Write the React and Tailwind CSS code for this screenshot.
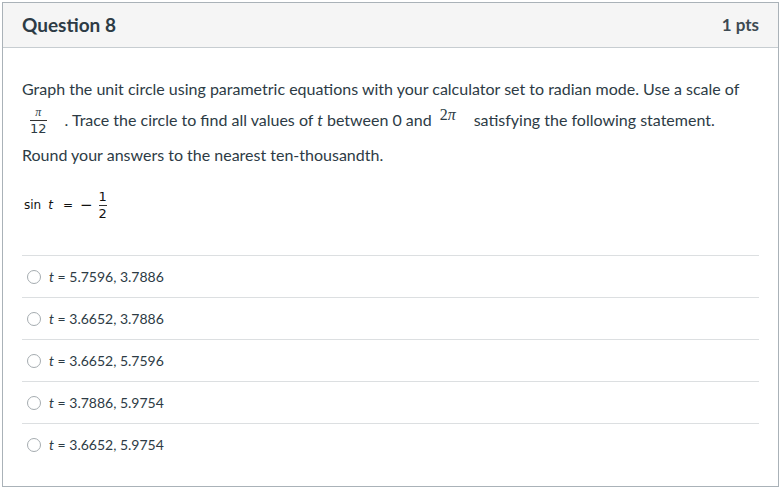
const answers = ['5.7596, 3.7886', '3.6652, 3.7886', '3.6652, 5.7596', '3.7886, 5.9754', '3.6652, 5.9754']

function Fraction({ top, bottom, className = '' }) {
  return (
    <span className={`inline-flex flex-col items-center align-middle leading-none ${className}`}>
      <span className="pb-[2px]">{top}</span>
      <span className="w-full border-t border-[#333]" />
      <span className="pt-[1px]">{bottom}</span>
    </span>
  )
}

export default function App() {
  return (
    <div className="h-[490px] w-[783px] bg-white pl-[2px] pt-[2px] font-['Lato','Noto_Sans',sans-serif] text-[#2d3b45]">
      <div className="h-[485px] w-[777px] border border-[#aab2b8]">
        <div className="flex h-[45px] items-center justify-between border-b border-[#c7cdd1] bg-[#f5f5f5] px-[19px]">
          <h2 className="text-[19px] font-bold text-[#2d3b45]">Question 8</h2>
          <span className="text-[17px] font-bold text-[#3d4a53]">1 pts</span>
        </div>
        <div className="px-[19px] pt-[30px]">
          <p className="text-[16px] leading-[22px]">
            Graph the unit circle using parametric equations with your calculator set to radian mode. Use a scale of
          </p>
          <p className="mt-[5px] flex items-center text-[16px] leading-[22px]">
            <Fraction
              className="ml-[8px] mr-[18px] font-['DejaVu_Sans',sans-serif] text-[13px]"
              top={<span className="font-['Liberation_Serif',serif] italic text-[12px]">π</span>}
              bottom="12"
            />
            <span>. Trace the circle to find all values of <i>t</i> between 0 and</span>
            <span className="ml-[8px] mr-[18px] -mt-[10px] font-['Liberation_Serif',serif] text-[16px]">
              2<i>π</i>
            </span>
            <span>satisfying the following statement.</span>
          </p>
          <p className="mt-[9px] text-[16px] leading-[22px]">Round your answers to the nearest ten-thousandth.</p>
          <div className="mt-[24px] flex items-center font-['DejaVu_Sans',sans-serif] text-[12px] text-[#111]">
            <span className="ml-[2px]">sin</span>
            <i className="ml-[7px]">t</i>
            <span className="ml-[10px]">=</span>
            <span className="ml-[7px] text-[15px]">−</span>
            <Fraction className="ml-[6px] text-[13px]" top="1" bottom="2" />
          </div>
          <div className="mt-[35px]">
            {answers.map((answer) => (
              <div key={answer} className="flex h-[42px] items-center border-t border-[#dcdfe1]">
                <span className="ml-[5px] size-[14px] rounded-full border border-[#a5acb0] bg-white" />
                <span className="ml-[8px] text-[14px] text-[#2d3b45]">
                  <i>t</i> = {answer}
                </span>
              </div>
            ))}
          </div>
        </div>
      </div>
    </div>
  )
}
